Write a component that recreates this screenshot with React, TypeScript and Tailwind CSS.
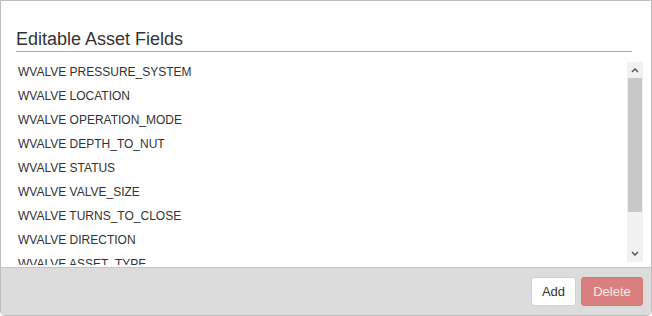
import React from "react";

const fields = [
  "WVALVE PRESSURE_SYSTEM",
  "WVALVE LOCATION",
  "WVALVE OPERATION_MODE",
  "WVALVE DEPTH_TO_NUT",
  "WVALVE STATUS",
  "WVALVE VALVE_SIZE",
  "WVALVE TURNS_TO_CLOSE",
  "WVALVE DIRECTION",
  "WVALVE ASSET_TYPE",
  "WVALVE MANUFACTURER",
];

const Chevron = ({ up }: { up?: boolean }) => (
  <svg width="8" height="6" viewBox="0 0 8 6" className="text-[#555]">
    <path
      d={up ? "M1 5 L4 2 L7 5" : "M1 1 L4 4 L7 1"}
      fill="none"
      stroke="currentColor"
      strokeWidth="1.5"
    />
  </svg>
);

const App = () => {
  return (
    <div
      className="w-[652px] h-[316px] flex flex-col bg-white border border-[#bdbdbd] rounded-b-[5px] overflow-hidden text-[#333]"
      style={{ fontFamily: '"Liberation Sans", Arial, sans-serif' }}
    >
      {/* Header */}
      <div className="flex-1 flex flex-col pl-[15px] pr-[19px] pt-[27px] min-h-0">
        <h2 className="text-[18px] leading-[22px] border-b border-[#a9a9a9] pb-[1px]">
          Editable Asset Fields
        </h2>

        {/* List + scrollbar */}
        <div className="flex mt-[8px] h-[205px]">
          <div className="flex-1 overflow-hidden pl-[2px]">
            {fields.map((f) => (
              <div key={f} className="h-[24px] flex items-center text-[12px]">
                {f}
              </div>
            ))}
          </div>
          <div className="w-[16px] mt-[2px] mb-[3px] flex flex-col bg-[#f1f1f1] -mr-[11px]">
            <div className="h-[16px] flex items-center justify-center">
              <Chevron up />
            </div>
            <div className="h-[134px] bg-[#c8c8c8] mx-[1px]" />
            <div className="flex-1" />
            <div className="h-[16px] flex items-center justify-center">
              <Chevron />
            </div>
          </div>
        </div>
      </div>

      {/* Footer */}
      <div className="h-[48px] shrink-0 bg-[#dcdcdc] border-t border-[#c4c4c4] flex items-center justify-end gap-[5px] pr-[8px]">
        <button className="h-[29px] w-[45px] bg-white border border-[#cfcfcf] rounded-[3px] text-[13px] text-[#333]">
          Add
        </button>
        <button className="h-[29px] w-[62px] bg-[#d9807e] border border-[#d67976] rounded-[3px] text-[13px] text-[#fbeaea]">
          Delete
        </button>
      </div>
    </div>
  );
};

export default App;
